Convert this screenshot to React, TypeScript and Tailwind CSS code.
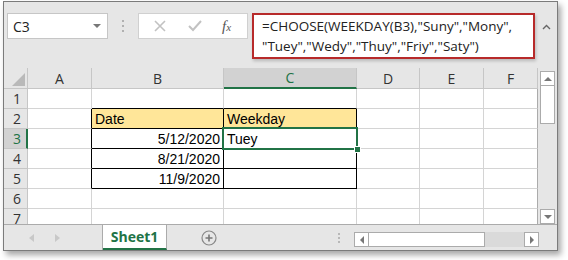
import React from "react";

type Col = { key: string; w: string };
const cols: Col[] = [
  { key: "A", w: "w-[64px]" },
  { key: "B", w: "w-[132px]" },
  { key: "C", w: "w-[133px]" },
  { key: "D", w: "w-[63px]" },
  { key: "E", w: "w-[64px]" },
  { key: "F", w: "w-[54px]" },
];

const data: Record<string, { text: string; right?: boolean; yellow?: boolean }> = {
  B2: { text: "Date", yellow: true },
  C2: { text: "Weekday", yellow: true },
  B3: { text: "5/12/2020", right: true },
  C3: { text: "Tuey" },
  B4: { text: "8/21/2020", right: true },
  B5: { text: "11/9/2020", right: true },
};

const rows = [1, 2, 3, 4, 5, 6, 7];

function Cell({ col, row }: { col: Col; row: number }) {
  const id = col.key + row;
  const d = data[id];
  const inTable = (col.key === "B" || col.key === "C") && row >= 2 && row <= 5;
  const rightBlack = inTable || (col.key === "A" && row >= 2 && row <= 5);
  const bottomBlack = (col.key === "B" || col.key === "C") && row >= 1 && row <= 5;
  const last = col.key === "F";
  return (
    <div
      className={[
        "relative h-[20px] shrink-0 border-b border-r flex items-end pb-[1px] px-[3px] text-[14px] leading-[16px] text-black",
        col.w,
        rightBlack ? "border-r-black" : last ? "border-r-[#ababab]" : "border-r-[#d4d4d4]",
        bottomBlack ? "border-b-black" : "border-b-[#d4d4d4]",
        d?.yellow ? "bg-[#ffe699]" : "bg-white",
        d?.right ? "justify-end" : "justify-start",
        id === "C3" ? "z-10" : "",
      ].join(" ")}
      style={{ fontFamily: '"Liberation Sans", Arial, sans-serif' }}
    >
      {d ? <span>{d.text}</span> : null}
      {id === "C3" ? (
        <div className="absolute left-[-2px] top-[-2px] right-[-2px] bottom-[-2px] border-2 border-[#217346]">
          <div className="absolute right-[-5px] bottom-[-5px] w-[7px] h-[7px] bg-[#217346] border border-white" />
        </div>
      ) : null}
    </div>
  );
}

export default function App() {
  const ui = { fontFamily: '"Open Sans", "Noto Sans", sans-serif' };
  return (
    <div className="w-[568px] h-[260px] bg-white pl-[3px] pt-[1px]" style={ui}>
      <div className="w-[555px] h-[250px] border border-[#7b7b7b] bg-[#e6e6e6] flex flex-col shadow-[3px_4px_6px_rgba(0,0,0,0.35)] overflow-hidden">
        {/* formula area */}
        <div className="h-[66px] shrink-0 flex items-start pt-[11px]">
          <div className="ml-[3px] w-[101px] h-[26px] bg-white border border-[#c6c6c6] flex items-center justify-between pl-[5px] pr-[6px]">
            <span className="text-[14px] text-[#222]">C3</span>
            <div className="w-0 h-0 border-l-[4px] border-r-[4px] border-t-[4px] border-l-transparent border-r-transparent border-t-[#777]" />
          </div>
          <div className="ml-[14px] mt-[7px] flex flex-col gap-[3px]">
            <div className="w-[2px] h-[2px] bg-[#b0b0b0]" />
            <div className="w-[2px] h-[2px] bg-[#b0b0b0]" />
            <div className="w-[2px] h-[2px] bg-[#b0b0b0]" />
          </div>
          <div className="ml-[14px] w-[110px] h-[26px] bg-white border border-[#d0d0d0] flex items-center">
            <svg className="ml-[15px]" width="12" height="12" viewBox="0 0 12 12">
              <path d="M1 1L11 11M11 1L1 11" stroke="#c2c2c2" strokeWidth="1.6" />
            </svg>
            <svg className="ml-[22px]" width="14" height="12" viewBox="0 0 14 12">
              <path d="M1 6L5 10L13 1" stroke="#c2c2c2" strokeWidth="2" fill="none" />
            </svg>
            <span
              className="ml-[20px] text-[15px] italic text-[#555]"
              style={{ fontFamily: '"Liberation Serif", serif' }}
            >
              f<span className="text-[11px]">x</span>
            </span>
          </div>
          <div className="ml-[4px] w-[283px] h-[46px] bg-white border-2 border-[#b72a2a] shadow-[1px_2px_3px_rgba(0,0,0,0.2)] pl-[8px] pt-[1px] text-[13.5px] leading-[20px] text-[#222] whitespace-nowrap">
            <div>=CHOOSE(WEEKDAY(B3),"Suny","Mony",</div>
            <div>"Tuey","Wedy","Thuy","Friy","Saty")</div>
          </div>
          <svg className="ml-[7px] mt-[11px]" width="9" height="6" viewBox="0 0 9 6">
            <path d="M1 5L4.5 1.5L8 5" stroke="#666" strokeWidth="1.4" fill="none" />
          </svg>
        </div>

        {/* grid + vscroll */}
        <div className="h-[156px] shrink-0 flex">
          <div className="w-[534px] h-[156px] overflow-hidden flex flex-col">
            {/* header row */}
            <div className="flex h-[21px] shrink-0">
              <div className="w-[24px] h-[21px] border-r border-b border-[#c6c6c6] bg-[#e6e6e6] relative">
                <svg className="absolute right-[2px] bottom-[2px]" width="13" height="13" viewBox="0 0 13 13">
                  <path d="M13 0L13 13L0 13Z" fill="#b9b9b9" />
                </svg>
              </div>
              {cols.map((c) =>
                c.key === "C" ? (
                  <div
                    key={c.key}
                    className={`${c.w} h-[21px] shrink-0 bg-[#d2d2d2] border-r border-r-[#c6c6c6] border-b-2 border-b-[#217346] flex items-center justify-center text-[14px] text-[#217346]`}
                  >
                    {c.key}
                  </div>
                ) : (
                  <div
                    key={c.key}
                    className={`${c.w} h-[21px] shrink-0 bg-[#e6e6e6] border-r border-b border-[#c6c6c6] flex items-center justify-center text-[14px] text-[#333]`}
                  >
                    {c.key}
                  </div>
                )
              )}
            </div>
            {rows.map((r) => (
              <div key={r} className="flex h-[20px] shrink-0">
                {r === 3 ? (
                  <div className="w-[24px] h-[20px] shrink-0 bg-[#d2d2d2] border-r-2 border-r-[#217346] border-b border-b-[#c6c6c6] flex items-center pl-[9px] text-[14px] text-[#217346]">
                    {r}
                  </div>
                ) : (
                  <div className="w-[24px] h-[20px] shrink-0 bg-[#e6e6e6] border-r border-b border-[#c6c6c6] flex items-center pl-[9px] text-[14px] text-[#333]">
                    {r}
                  </div>
                )}
                {cols.map((c) => (
                  <Cell key={c.key} col={c} row={r} />
                ))}
              </div>
            ))}
          </div>
          {/* vertical scrollbar */}
          <div className="w-[19px] h-[156px] bg-[#e6e6e6] flex flex-col items-center pt-[3px]">
            <div className="w-[15px] h-[15px] bg-white border border-[#ababab] flex items-center justify-center">
              <div className="w-0 h-0 border-l-[4px] border-r-[4px] border-b-[4px] border-l-transparent border-r-transparent border-b-[#777]" />
            </div>
            <div className="w-[15px] h-[38px] bg-white border border-[#ababab] border-t-0" />
            <div className="flex-1" />
            <div className="w-[15px] h-[15px] bg-white border border-[#ababab] flex items-center justify-center">
              <div className="w-0 h-0 border-l-[4px] border-r-[4px] border-t-[4px] border-l-transparent border-r-transparent border-t-[#777]" />
            </div>
          </div>
        </div>

        {/* tab bar */}
        <div className="flex-1 flex border-t border-[#ababab] bg-[#e6e6e6]">
          <div className="w-[99px] border-r border-[#ababab] flex items-center pl-[25px] gap-[21px]">
            <div className="w-0 h-0 border-t-[4px] border-b-[4px] border-r-[5px] border-t-transparent border-b-transparent border-r-[#c8c8c8]" />
            <div className="w-0 h-0 border-t-[4px] border-b-[4px] border-l-[5px] border-t-transparent border-b-transparent border-l-[#c8c8c8]" />
          </div>
          <div className="w-[64px] bg-white border-b-2 border-[#217346] border-r border-r-[#ababab] flex items-center justify-center text-[14px] font-bold text-[#217346]">
            Sheet1
          </div>
          <div className="ml-[34px] flex items-center">
            <svg width="16" height="16" viewBox="0 0 16 16">
              <circle cx="8" cy="8" r="7" stroke="#888" strokeWidth="1.2" fill="none" />
              <path d="M8 4.5V11.5M4.5 8H11.5" stroke="#777" strokeWidth="1.6" />
            </svg>
          </div>
          <div className="ml-[121px] flex flex-col justify-center gap-[2px]">
            <div className="w-[2px] h-[2px] bg-[#b8b8b8]" />
            <div className="w-[2px] h-[2px] bg-[#b8b8b8]" />
            <div className="w-[2px] h-[2px] bg-[#b8b8b8]" />
          </div>
          <div className="ml-[14px] mt-[7px] flex h-[15px]">
            <div className="w-[15px] h-[15px] bg-white border border-[#ababab] flex items-center justify-center">
              <div className="w-0 h-0 border-t-[4px] border-b-[4px] border-r-[4px] border-t-transparent border-b-transparent border-r-[#777]" />
            </div>
            <div className="w-[116px] h-[15px] bg-white border border-[#ababab] border-l-0" />
            <div className="w-[39px] h-[15px] bg-[#dadada]" />
            <div className="w-[15px] h-[15px] bg-white border border-[#ababab] flex items-center justify-center">
              <div className="w-0 h-0 border-t-[4px] border-b-[4px] border-l-[4px] border-t-transparent border-b-transparent border-l-[#777]" />
            </div>
          </div>
        </div>
      </div>
    </div>
  );
}
